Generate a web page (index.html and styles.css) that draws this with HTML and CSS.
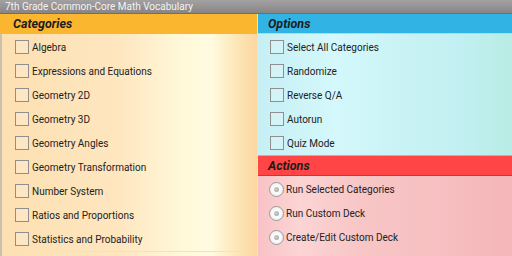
FILE: index.html
```html
<!DOCTYPE html>
<html lang="en">

<head>
    <meta charset="UTF-8">
    <title>7th Grade Common-Core Math Vocabulary</title>
    <link rel="stylesheet" href="styles.css">
</head>

<body>
    <div class="title-bar">7th Grade Common-Core Math Vocabulary</div>
    <div class="panes">
        <!-- categories -->
        <section class="pane categories">
            <h2 class="pane-head">Categories</h2>
            <ul class="list">
                <li><span class="check"></span>Algebra</li>
                <li><span class="check"></span>Expressions and Equations</li>
                <li><span class="check"></span>Geometry 2D</li>
                <li><span class="check"></span>Geometry 3D</li>
                <li><span class="check"></span>Geometry Angles</li>
                <li><span class="check"></span>Geometry Transformation</li>
                <li><span class="check"></span>Number System</li>
                <li><span class="check"></span>Ratios and Proportions</li>
                <li><span class="check"></span>Statistics and Probability</li>
            </ul>
        </section>
        <div class="side">
            <!-- options -->
            <section class="pane options">
                <h2 class="pane-head">Options</h2>
                <ul class="list">
                    <li><span class="check"></span>Select All Categories</li>
                    <li><span class="check"></span>Randomize</li>
                    <li><span class="check"></span>Reverse Q/A</li>
                    <li><span class="check"></span>Autorun</li>
                    <li><span class="check"></span>Quiz Mode</li>
                </ul>
            </section>
            <!-- actions -->
            <section class="pane actions">
                <h2 class="pane-head">Actions</h2>
                <ul class="list">
                    <li><span class="radio"></span>Run Selected Categories</li>
                    <li><span class="radio"></span>Run Custom Deck</li>
                    <li><span class="radio"></span>Create/Edit Custom Deck</li>
                </ul>
            </section>
        </div>
    </div>
</body>

</html>
```

FILE: styles.css
```css
body {
    margin: 0;
    width: 512px;
    height: 256px;
    overflow: hidden;
    font-family: Roboto, "Liberation Sans", sans-serif;
    background: #fde2b6;
}

.title-bar {
    height: 14px;
    line-height: 14px;
    padding-left: 5px;
    font-size: 10px;
    color: #f4f4f4;
    background: linear-gradient(#a3a1a1, #878585);
    border-bottom: 1px solid #6f6d6d;
    box-sizing: border-box;
}

.panes {
    display: flex;
    height: 242px;
}

.pane-head {
    margin: 0;
    height: 20px;
    line-height: 20px;
    font-size: 12.5px;
    font-weight: bold;
    font-style: italic;
    color: #1c1c1c;
    padding-left: 10px;
    box-sizing: border-box;
}

.list {
    list-style: none;
    margin: 0;
    padding: 1px 0 0;
}

.list li {
    height: 24px;
    display: flex;
    align-items: center;
    font-size: 10px;
    color: #222;
}

.check {
    width: 12px;
    height: 12px;
    border: 1px solid #8f8f8f;
    background: rgba(255, 255, 255, 0.2);
    margin-right: 3px;
}

.radio {
    width: 13px;
    height: 13px;
    border: 1px solid #9a9a9a;
    border-radius: 50%;
    margin-right: 2px;
    display: flex;
    align-items: center;
    justify-content: center;
    background: radial-gradient(circle, #fdfdfd 30%, #e6e6e6 100%);
}

.radio::after {
    content: "";
    width: 5px;
    height: 5px;
    border-radius: 50%;
    background: radial-gradient(circle at 40% 40%, #d0d0d0, #9c9c9c);
}

.categories {
    width: 257px;
    border-left: 2px solid #c9c0b0;
    box-sizing: border-box;
    background: linear-gradient(to right, #fde0b2 0%, #fee6bf 45%, #fff9da 72%, #fffbe0 82%, #fde4b4 93%, #fcd7a0 100%);
}

.categories .pane-head {
    background: #fbb630;
    margin-left: -2px;
    padding-left: 13px;
}

.categories .list {
    padding-left: 13px;
    border-bottom: 1px solid #f2e2c2;
    margin-right: 4px;
}

.side {
    flex: 1;
    display: flex;
    flex-direction: column;
    border-left: 1px solid #f4e2bc;
}

.options {
    background: linear-gradient(to right, #c6eff4 0%, #d4f8fb 30%, #c8f2f4 60%, #c2f0f2 80%, #b8ece4 100%);
}

.options .pane-head {
    background: #31b3e3;
    border-bottom: 1px solid #9fe0f2;
    line-height: 19px;
}

.options .list {
    padding-left: 12px;
}

.actions {
    flex: 1;
    border-top: 1px solid #a9b9b9;
    background: linear-gradient(to right, #f8c2c6 0%, #fcd4d4 16%, #f8c6c6 40%, #f6bec0 75%, #f4b6b8 100%);
}

.actions .pane-head {
    background: #ff4545;
    border-bottom: 1px solid #d83030;
    line-height: 19px;
}

.actions .list {
    padding-left: 11px;
}
```
